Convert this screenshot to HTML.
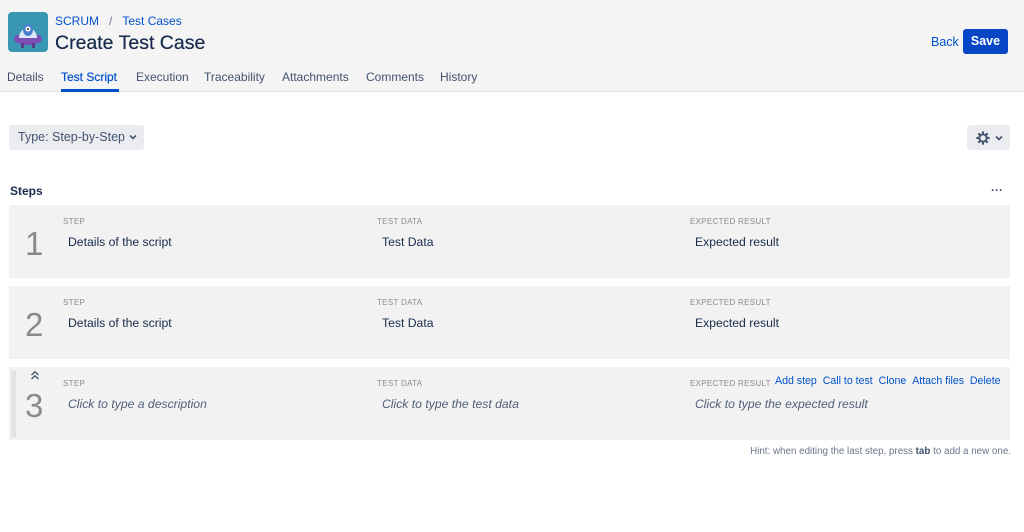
<!DOCTYPE html>
<html><head><style>
*{margin:0;padding:0;box-sizing:border-box}
body{width:1024px;height:532px;background:#fff;font-family:"Liberation Sans",sans-serif;color:#172b4d;position:relative;overflow:hidden}
.hdr{position:absolute;left:0;top:0;width:1024px;height:92px;background:#f4f4f4;border-bottom:1px solid #e2e2e2}
.abs{position:absolute;white-space:nowrap}
.bc{font-size:12px;color:#0052cc}
.title{font-size:19.5px;color:#172b4d;text-shadow:0 0 0.4px #172b4d}
.tab{font-size:12px;color:#42526e;top:70px}
.row{position:absolute;left:9px;width:1001px;height:73px;background:#f2f2f2}
.num{position:absolute;left:16px;top:20px;font-size:33px;color:#8a8a8a;font-weight:300}
.lbl{position:absolute;top:12px;font-size:8px;color:#8a8a8a;letter-spacing:.3px}
.val{position:absolute;top:30px;font-size:12.2px;color:#172b4d}
.it{font-style:italic;color:#505f79}
.act{font-size:10.6px;color:#0052cc}
</style></head><body>
<div class="hdr"></div>
<svg class="abs" style="left:8px;top:12px" width="40" height="40" viewBox="0 0 40 40">
<rect width="40" height="40" rx="4" fill="#3a97b3"/>
<ellipse cx="20" cy="27" rx="14" ry="6" fill="#7b4fb5"/>
<rect x="13" y="31" width="3" height="5" fill="#5b3a8a"/><rect x="24" y="31" width="3" height="5" fill="#5b3a8a"/>
<path d="M11 26 A9 10 0 0 1 29 26 Z" fill="#dde8f5"/>
<ellipse cx="20" cy="18" rx="5" ry="6" fill="#4a7fd0"/>
<circle cx="20" cy="17" r="2.5" fill="#fff"/><circle cx="20" cy="17" r="1" fill="#333"/>
</svg>
<div class="abs bc" style="left:55px;top:14px">SCRUM&nbsp;&nbsp;&nbsp;<span style="color:#6b778c">/</span>&nbsp;&nbsp;&nbsp;Test Cases</div>
<div class="abs title" style="left:55px;top:32px">Create Test Case</div>
<div class="abs" style="left:931px;top:35px;font-size:12.5px;color:#0052cc">Back</div>
<div class="abs" style="left:963px;top:29px;width:45px;height:25px;background:#0747c6;border-radius:3px;color:#fff;font-weight:bold;font-size:12.5px;text-align:center;line-height:25px">Save</div>
<div class="abs tab" style="left:7px">Details</div>
<div class="abs tab" style="left:61px;color:#0052cc;text-shadow:0 0 0.5px #0052cc">Test Script</div>
<div class="abs" style="left:61px;top:89px;width:58px;height:3px;background:#0052cc"></div>
<div class="abs tab" style="left:136px">Execution</div>
<div class="abs tab" style="left:204px">Traceability</div>
<div class="abs tab" style="left:282px">Attachments</div>
<div class="abs tab" style="left:366px">Comments</div>
<div class="abs tab" style="left:440px">History</div>

<div class="abs" style="left:9px;top:125px;width:135px;height:25px;background:#ebecf0;border-radius:3px;font-size:12.5px;color:#42526e;line-height:25px;padding-left:9px">Type: Step-by-Step
<svg style="position:absolute;left:120px;top:9px" width="8" height="6" viewBox="0 0 8 6"><path d="M1 1.5 L4 4.5 L7 1.5" stroke="#42526e" stroke-width="1.6" fill="none"/></svg></div>
<div class="abs" style="left:967px;top:125px;width:43px;height:25px;background:#ebecf0;border-radius:3px">
<svg style="position:absolute;left:9px;top:6px" width="14" height="14" viewBox="0 0 14 14"><g stroke="#42526e" stroke-width="2.2" stroke-linecap="round"><path d="M7 1.3V2.3M7 11.7V12.7M1.3 7H2.3M11.7 7H12.7M3 3L3.7 3.7M10.3 10.3L11 11M3 11L3.7 10.3M10.3 3.7L11 3"/></g><circle cx="7" cy="7" r="3.6" fill="none" stroke="#42526e" stroke-width="1.8"/></svg>
<svg style="position:absolute;left:28px;top:10px" width="8" height="6" viewBox="0 0 8 6"><path d="M1 1.5 L4 4.5 L7 1.5" stroke="#42526e" stroke-width="1.6" fill="none"/></svg></div>
<div class="abs" style="left:10px;top:184px;font-size:12px;font-weight:bold">Steps</div>
<div class="abs" style="left:991px;top:183px;font-size:12px;font-weight:bold;color:#42526e">&middot;&middot;&middot;</div>

<div class="row" style="top:205px"><div class="num">1</div>
<div class="lbl" style="left:54px">STEP</div><div class="val" style="left:59px">Details of the script</div>
<div class="lbl" style="left:368px">TEST DATA</div><div class="val" style="left:373px">Test Data</div>
<div class="lbl" style="left:681px">EXPECTED RESULT</div><div class="val" style="left:686px">Expected result</div></div>
<div class="row" style="top:286px"><div class="num">2</div>
<div class="lbl" style="left:54px">STEP</div><div class="val" style="left:59px">Details of the script</div>
<div class="lbl" style="left:368px">TEST DATA</div><div class="val" style="left:373px">Test Data</div>
<div class="lbl" style="left:681px">EXPECTED RESULT</div><div class="val" style="left:686px">Expected result</div></div>
<div class="row" style="top:367px">
<div style="position:absolute;left:2px;top:4px;width:5px;height:66px;background-image:radial-gradient(#b5b5b5 0.6px,transparent 0.7px);background-size:2px 2px"></div>
<svg style="position:absolute;left:21px;top:3px" width="10" height="10" viewBox="0 0 10 10"><path d="M1.5 5L5 1.8L8.5 5M1.5 9L5 5.8L8.5 9" stroke="#42526e" stroke-width="1.3" fill="none"/></svg>
<div class="num">3</div>
<div class="lbl" style="left:54px">STEP</div><div class="val it" style="left:59px">Click to type a description</div>
<div class="lbl" style="left:368px">TEST DATA</div><div class="val it" style="left:373px">Click to type the test data</div>
<div class="lbl" style="left:681px">EXPECTED RESULT</div><div class="val it" style="left:686px">Click to type the expected result</div>
<div class="act" style="position:absolute;left:766px;top:8px;white-space:nowrap">Add step&nbsp;&nbsp;Call to test&nbsp;&nbsp;Clone&nbsp;&nbsp;Attach files&nbsp;&nbsp;Delete</div>
</div>
<div class="abs" style="right:13px;top:446px;font-size:9.8px;color:#6b778c">Hint: when editing the last step, press <b style="color:#42526e">tab</b> to add a new one.</div>
</body></html>
